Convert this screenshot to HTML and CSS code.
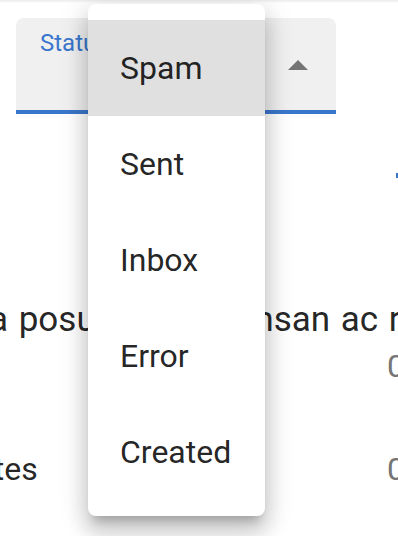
FILE: index.html
```html
<!DOCTYPE html>
<html lang="en">
<head>
<meta charset="utf-8">
<title>Status select</title>
<link rel="stylesheet" href="styles.css">
</head>
<body>
<div class="page">
  <div class="topshade"></div>
  <div class="field-wrap">
    <div class="select">
      <label class="select-label">Status</label>
      <svg class="select-arrow" viewBox="0 0 24 24" width="48" height="48" aria-hidden="true"><path d="M7 14l5-5 5 5z"/></svg>
    </div>
  </div>
  <div class="tab-row"><span class="tab-mark"></span></div>
  <p class="desc">a posuere. Accumsan ac risus</p>
  <div class="row row-first"><span class="cell-num">0</span></div>
  <div class="row row-second"><span class="cell-name">Templates</span><span class="cell-num">0</span></div>

  <ul class="menu" role="listbox">
    <li class="menu-item selected">Spam</li>
    <li class="menu-item">Sent</li>
    <li class="menu-item">Inbox</li>
    <li class="menu-item">Error</li>
    <li class="menu-item">Created</li>
  </ul>
</div>
</body>
</html>
```

FILE: styles.css
```css
html, body {
  margin: 0;
  padding: 0;
  background: #fff;
}
body {
  font-family: Roboto, "Liberation Sans", Arial, sans-serif;
  color: rgba(0, 0, 0, 0.87);
}
.page {
  position: relative;
  width: 398px;
  height: 536px;
  overflow: hidden;
}
.topshade {
  height: 3px;
  background: linear-gradient(to bottom, #ececec, #f6f6f6 60%, #fff);
}
.field-wrap {
  padding: 15px 16px 0;
}
.select {
  width: 320px;
  height: 92px;
  box-sizing: content-box;
  background: #f0f0f0;
  border-radius: 8px 8px 0 0;
  border-bottom: 4px solid #3a76cc;
  display: flex;
  justify-content: space-between;
  align-items: flex-start;
}
.select-label {
  margin: 13px 0 0 24px;
  font-size: 24px;
  line-height: 24px;
  color: #3a76cc;
}
.select-arrow {
  margin: 24px 14px 0 0;
  fill: #757575;
}
.tab-row {
  margin-top: 59px;
  height: 5px;
  display: flex;
  justify-content: flex-end;
}
.tab-mark {
  width: 2px;
  height: 5px;
  background: #3a76cc;
}
.desc {
  margin: 121px 0 0 -11px;
  font-size: 35px;
  line-height: 42px;
  word-spacing: 2px;
  white-space: nowrap;
}
.row {
  display: flex;
  align-items: baseline;
  font-size: 32px;
  line-height: 48px;
  white-space: nowrap;
}
.row-first {
  margin-top: 1px;
  justify-content: flex-end;
}
.row-second {
  margin-top: 55px;
  justify-content: space-between;
}
.cell-name {
  margin-left: -112px;
}
.cell-num {
  width: 11px;
  overflow: hidden;
  color: #757575;
}
.menu {
  position: absolute;
  left: 88px;
  top: 4px;
  width: 177px;
  margin: 0;
  padding: 16px 0;
  list-style: none;
  background: #fff;
  border-radius: 8px;
  box-shadow: 0 10px 10px -6px rgba(0, 0, 0, 0.2),
              0 16px 20px 2px rgba(0, 0, 0, 0.14),
              0 6px 28px 4px rgba(0, 0, 0, 0.12);
}
.menu-item {
  height: 96px;
  padding: 0 32px;
  display: flex;
  align-items: center;
  font-size: 32px;
  line-height: 48px;
  color: rgba(0, 0, 0, 0.87);
}
.menu-item.selected {
  background: #e0e0e0;
}
```
